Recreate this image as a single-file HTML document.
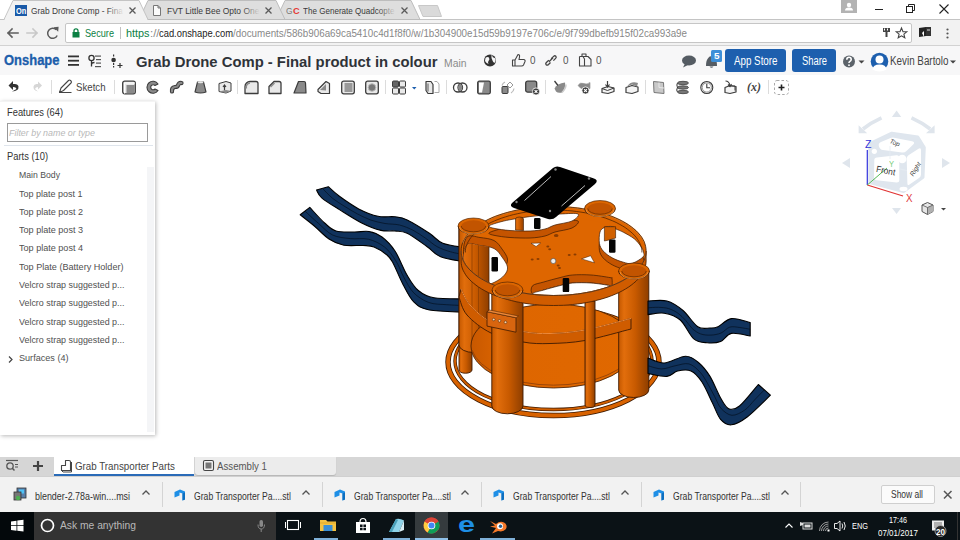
<!DOCTYPE html>
<html><head><meta charset="utf-8">
<style>
*{margin:0;padding:0;box-sizing:border-box}
html,body{width:960px;height:540px;overflow:hidden;background:#fff;font-family:"Liberation Sans",sans-serif;position:relative}
.a{position:absolute}
.t{position:absolute;white-space:nowrap;transform-origin:0 0}
svg{position:absolute;overflow:visible}
</style></head><body>
<div class="a" style="left:0;top:0;width:960px;height:20px;background:#fff"></div>
<svg style="left:0;top:0" width="960" height="46">
<rect x="0" y="19.5" width="960" height="26" fill="#f2f2f2"/>
<line x1="0" y1="19.5" x2="960" y2="19.5" stroke="#c4c4c4"/>
<path d="M276 19.5 L285 0.5 L411 0.5 L420 19.5 Z" fill="#dedede" stroke="#bdbdbd"/>
<path d="M139 19.5 L148 0.5 L276 0.5 L285 19.5 Z" fill="#dedede" stroke="#bdbdbd"/>
<path d="M423 16.5 L418.5 5.5 L437.5 5.5 L441.5 16.5 Z" fill="#dadada" stroke="#c8c8c8" stroke-linejoin="round" stroke-width="1"/>
<path d="M0 20.5 L4 20.5 L13 0.5 L139 0.5 L148 20.5 L960 20.5 L960 23 L0 23 Z" fill="#f2f2f2" stroke="none"/>
<path d="M0 19.5 L4 19.5 L13 0.5 L139 0.5 L148 19.5" fill="none" stroke="#c4c4c4"/>
<line x1="0" y1="45.5" x2="960" y2="45.5" stroke="#d2d2d2"/>
</svg>
<div class="a" style="left:15px;top:5px;width:12px;height:11px;background:#1a5aa8"></div>
<svg style="left:129.2px;top:7px" width="7" height="7"><path d="M0.5 0.5 L6.5 6.5 M6.5 0.5 L0.5 6.5" stroke="#5a5a5a" stroke-width="1.3"/></svg>
<svg style="left:265.0px;top:7px" width="7" height="7"><path d="M0.5 0.5 L6.5 6.5 M6.5 0.5 L0.5 6.5" stroke="#5a5a5a" stroke-width="1.3"/></svg>
<svg style="left:400.5px;top:7px" width="7" height="7"><path d="M0.5 0.5 L6.5 6.5 M6.5 0.5 L0.5 6.5" stroke="#5a5a5a" stroke-width="1.3"/></svg>
<svg style="left:152px;top:4px" width="10" height="13"><path d="M1.5 1.5 H6 L8.5 4 V11.5 H1.5 Z M6 1.5 V4 H8.5" fill="#fafafa" stroke="#777" stroke-width="1"/></svg>
<div class="a" style="left:841px;top:0;width:16px;height:13px;background:#b3b3b3"></div>
<svg style="left:841px;top:0" width="16" height="13"><circle cx="8" cy="5" r="2.2" fill="#fff"/><path d="M4 10.5 Q4 7.5 8 7.5 Q12 7.5 12 10.5 Z" fill="#fff"/></svg>
<svg style="left:870px;top:0" width="90" height="20"><line x1="5" y1="9.5" x2="13" y2="9.5" stroke="#222" stroke-width="1"/><rect x="36.5" y="6.5" width="6" height="6" fill="none" stroke="#222"/><path d="M38.5 6.5 V4.5 H44.5 V10.5 H42.5" fill="none" stroke="#222"/><path d="M69.5 4.5 L78.5 13.5 M78.5 4.5 L69.5 13.5" stroke="#222" stroke-width="1.1"/></svg>
<svg style="left:0;top:20px" width="70" height="26">
<path d="M8 13 H18 M8 13 L12 9 M8 13 L12 17" stroke="#5f5f5f" stroke-width="1.6" fill="none" stroke-linecap="square"/>
<path d="M27 13 H37 M37 13 L33 9 M37 13 L33 17" stroke="#c8c8c8" stroke-width="1.6" fill="none" stroke-linecap="square"/>
<path d="M56.2 9.8 A5 5 0 1 0 57.2 15.5" stroke="#5a5a5a" stroke-width="1.5" fill="none"/>
<path d="M53.5 7.2 L58.6 6.8 L58.2 11.8 Z" fill="#5a5a5a"/>
</svg>
<div class="a" style="left:65px;top:23px;width:847px;height:20px;background:#fff;border:1px solid #c6c6c6;border-radius:2px"></div>
<svg style="left:70px;top:26px" width="12" height="14"><path d="M4 6 V4.8 A2 2 0 0 1 8 4.8 V6" stroke="#0b8043" stroke-width="1.3" fill="none"/><rect x="2.5" y="6" width="7" height="5.5" fill="#0b8043"/></svg>
<div class="a" style="left:120px;top:27px;width:1px;height:12px;background:#c0c0c0"></div>
<svg style="left:880px;top:24px" width="80" height="20">
<rect x="3" y="4" width="7" height="4" fill="#444"/><rect x="5.5" y="8" width="2" height="5" fill="#444"/><rect x="4" y="4.5" width="1" height="2" fill="#fff"/><rect x="7" y="4.5" width="1" height="2" fill="#fff"/>
<path d="M21.5 4 L23 7.6 L26.8 7.8 L23.9 10.2 L24.8 13.8 L21.5 11.8 L18.2 13.8 L19.1 10.2 L16.2 7.8 L20 7.6 Z" fill="none" stroke="#444" stroke-width="1.1"/>
<path d="M39 4 L46 3 V12 L39 13 Z" fill="#222"/><rect x="46" y="3" width="5" height="9" fill="#333"/><rect x="47" y="5" width="3" height="2" fill="#888"/><path d="M42 9 L44 7 L44 13 Z" fill="#fff"/>
<circle cx="67.5" cy="5.5" r="1.1" fill="#555"/><circle cx="67.5" cy="9.5" r="1.1" fill="#555"/><circle cx="67.5" cy="13.5" r="1.1" fill="#555"/>
</svg>
<div class="a" style="left:0;top:46px;width:960px;height:28.5px;background:#f7f7f8"></div>
<svg style="left:60px;top:50px" width="70" height="22">
<rect x="8" y="5.5" width="11" height="1.8" fill="#333"/><rect x="8" y="9.8" width="11" height="1.8" fill="#333"/><rect x="8" y="14" width="11" height="1.8" fill="#333"/>
<circle cx="31.5" cy="8" r="2.6" fill="none" stroke="#333" stroke-width="1.3"/><path d="M31.5 10.6 V16.5 M31.5 14.5 Q31.5 12.5 34.5 12.5" fill="none" stroke="#333" stroke-width="1.3"/>
<rect x="35" y="5.5" width="6" height="1.2" fill="#555"/><rect x="36" y="9" width="5" height="1.2" fill="#555"/><rect x="36" y="12.5" width="5" height="1.2" fill="#555"/><rect x="35" y="16" width="6" height="1.2" fill="#555"/>
<rect x="53" y="4.5" width="1.2" height="2" fill="#333"/><circle cx="53.6" cy="10" r="2.3" fill="#333"/><rect x="53" y="13" width="1.2" height="2" fill="#333"/><rect x="53" y="16" width="1.2" height="1.5" fill="#333"/>
<path d="M57.5 15.5 H62.5 M60 13 V18" stroke="#333" stroke-width="1.2"/>
</svg>
<svg style="left:480px;top:48.5px" width="130" height="22">
<circle cx="10" cy="11.5" r="6" fill="#333"/>
<path d="M5.5 9 Q7 7.5 9 8.5 Q10 10.5 8.5 12 Q7.5 13 8.5 15 Q6 14 5 12 Z M11.5 6 Q13 6.5 12.5 8 Q14 8.5 15.5 9.5 Q16 12 14.5 14 Q13 13 12.5 11.5 Q11 10 11.5 6 Z" fill="#f7f7f8"/>
<path d="M32.5 11 H35 V17 H32.5 Z M35 11 L38 5.5 Q40 5.5 39.5 8 L39 10.5 H44 Q45.5 11 45 12.5 L43.5 16 Q43 17 41.5 17 H35" fill="none" stroke="#444" stroke-width="1.1" stroke-linejoin="round"/>
<path d="M70.5 13.5 L68.5 15.5 Q67.2 16.7 66.2 15.7 Q65.2 14.7 66.4 13.5 L68.8 11.1 M71.2 9.8 L73.6 7.4 Q74.8 6.2 75.8 7.2 Q76.8 8.2 75.6 9.4 L73.4 11.6 M69 12.8 L73 8.8" fill="none" stroke="#444" stroke-width="1.3"/>
<path d="M99.5 7.5 V17 H104 M103 7.5 H108 L111 10.5 V17 H104.5 V10 Z M99.5 7.5 H102 V5 H106 V7.5" fill="none" stroke="#444" stroke-width="1.1" stroke-linejoin="round"/>
</svg>
<svg style="left:675px;top:48px" width="60" height="26">
<ellipse cx="14" cy="12.5" rx="7" ry="5" fill="#555c63"/><path d="M10 15.5 L8 19.5 L14 16.5 Z" fill="#555c63"/>
<path d="M31 18 Q31 13 32.5 11 Q34 8 36.5 8 Q39 8 40.5 11 Q42 13 42 18 Z" fill="#555c63"/><path d="M34.5 18.5 Q36.5 21 38.5 18.5 Z" fill="#555c63"/>
<rect x="36" y="2" width="11" height="12" rx="1.5" fill="#3d8fd8"/>
</svg>
<div class="a" style="left:725px;top:48.5px;width:61px;height:23.5px;background:#1d5fae;border-radius:3px"></div>
<div class="a" style="left:792px;top:48.5px;width:43.5px;height:23.5px;background:#1d5fae;border-radius:3px"></div>
<svg style="left:840px;top:50px" width="120" height="24">
<circle cx="9" cy="11.5" r="6" fill="#5c636a"/>
<path d="M6.8 9.8 Q6.8 7.3 9 7.3 Q11.2 7.3 11.2 9.5 Q11.2 10.8 9.8 11.4 Q9 11.8 9 13" fill="none" stroke="#fff" stroke-width="1.6"/><circle cx="9" cy="15.2" r="0.9" fill="#fff"/>
<path d="M18.5 10.5 H24.5 L21.5 13.5 Z" fill="#444"/>
<circle cx="39.5" cy="11.5" r="8.8" fill="#1d5fae"/>
<circle cx="39.5" cy="9.5" r="4" fill="#fff"/><path d="M32.5 19.5 Q33 14.5 39.5 14.5 Q46 14.5 46.5 19.5 Q43.5 21.5 39.5 21.5 Q35.5 21.5 32.5 19.5 Z" fill="#fff"/>
<path d="M110 10.5 H116 L113 13.5 Z" fill="#444"/>
</svg>
<div class="a" style="left:0;top:74.5px;width:960px;height:26px;background:#fff"></div>
<svg style="left:0;top:74px" width="960" height="26"><g transform="translate(122,6.5)"><rect x="0.7" y="0.7" width="12.6" height="12.6" rx="2" fill="#e9e9e9" stroke="#3c3c3c" stroke-width="1.3"/><rect x="4.5" y="4.5" width="8.2" height="8.2" fill="#8a8a8a"/><path d="M2.5 13 V2.5 H13" stroke="#fff" stroke-width="1" fill="none"/></g><g transform="translate(146,6.5)"><path d="M12 3.5 A6 6 0 1 0 12 10 L9 8.5 A2.5 2.5 0 1 1 9 5 Z" fill="#8a8a8a" stroke="#3c3c3c" stroke-width="1.1" stroke-linejoin="round"/></g><g transform="translate(170,6.5)"><path d="M2 11 Q1.5 7 5 6.5 Q7.5 6.5 8 5 Q9 2 11.5 2.5" fill="none" stroke="#3c3c3c" stroke-width="4.2" stroke-linecap="round"/><path d="M2 11 Q1.5 7 5 6.5 Q7.5 6.5 8 5 Q9 2 11.5 2.5" fill="none" stroke="#8a8a8a" stroke-width="2.2" stroke-linecap="round"/></g><g transform="translate(194,6.5)"><path d="M3.5 1.5 H9.5 L12 11.5 Q6.5 13.5 1 11.5 Z" fill="#8a8a8a" stroke="#3c3c3c" stroke-width="1.1" stroke-linejoin="round"/><ellipse cx="6.5" cy="1.8" rx="3" ry="1" fill="#e9e9e9"/></g><g transform="translate(218,6.5)"><path d="M1 3 L8 1 L13 2.5 V10.5 L8 12.5 L1 11 Z" fill="#e9e9e9" stroke="#3c3c3c" stroke-width="1"/><path d="M6.5 10 V5 M5 6.5 L6.5 4.5 L8 6.5" stroke="#3c3c3c" stroke-width="1.2" fill="none"/><path d="M1 11 L8 12.5 L13 10.5 L8 9.5 Z" fill="#8a8a8a"/></g><g transform="translate(244,6.5)"><path d="M1 13 V6 A5 5 0 0 1 6 1 H12 Q14 1 14 3 V13 Z" fill="#e9e9e9" stroke="#3c3c3c" stroke-width="1.3" stroke-linejoin="round"/><path d="M2.5 8 A4 4 0 0 1 6 2.5" stroke="#8a8a8a" stroke-width="1.5" fill="none"/></g><g transform="translate(268,6.5)"><path d="M1 13 V6 L6 1 H11 Q13 1 13 3 V13 Z" fill="#e9e9e9" stroke="#3c3c3c" stroke-width="1.3" stroke-linejoin="round"/><path d="M2.5 6.5 L6.5 2.5" stroke="#8a8a8a" stroke-width="1.5" fill="none"/></g><g transform="translate(293,6.5)"><path d="M1 12.5 L5.5 1 H11 Q12.5 1 12.5 2.5 L13 12.5 Z" fill="#8a8a8a" stroke="#3c3c3c" stroke-width="1.2" stroke-linejoin="round"/></g><g transform="translate(317,6.5)"><path d="M1 9 L7 3 L9 1 L12.5 3 V13 H4 L1 11 Z" fill="#e9e9e9" stroke="#3c3c3c" stroke-width="1.2" stroke-linejoin="round"/><path d="M3 9.5 L9 3.5 V10 Z" fill="#8a8a8a"/></g><g transform="translate(341,6.5)"><rect x="0.7" y="0.7" width="12.6" height="12.6" rx="2" fill="#e9e9e9" stroke="#3c3c3c" stroke-width="1.3"/><rect x="3.5" y="2.5" width="8" height="9" fill="#999"/></g><g transform="translate(365,6.5)"><rect x="0.7" y="0.7" width="12.6" height="12.6" rx="2" fill="#e9e9e9" stroke="#3c3c3c" stroke-width="1.3"/><circle cx="7" cy="7" r="3.8" fill="#777" stroke="#bbb"/></g><g transform="translate(392,6.5)"><rect x="0.5" y="0.5" width="6" height="6" rx="1" fill="#666" stroke="#3c3c3c"/><rect x="7.5" y="0.5" width="6" height="6" rx="1" fill="#e9e9e9" stroke="#3c3c3c"/><rect x="0.5" y="7.5" width="6" height="6" rx="1" fill="#e9e9e9" stroke="#3c3c3c"/><rect x="7.5" y="7.5" width="6" height="6" rx="1" fill="#e9e9e9" stroke="#3c3c3c"/></g><g transform="translate(425,6.5)"><path d="M1 1 H6 L8 4 V13 H3 L1 10 Z" fill="#e9e9e9" stroke="#3c3c3c" stroke-width="1.2" stroke-linejoin="round"/><path d="M9.5 1 H12 L14 3.5 V12 H9.5" fill="none" stroke="#aaa" stroke-width="1"/><path d="M3 3 V11" stroke="#8a8a8a" stroke-width="1.5"/></g><g transform="translate(453,6.5)"><circle cx="5" cy="7" r="4.5" fill="none" stroke="#3c3c3c" stroke-width="1.3"/><circle cx="9.5" cy="7" r="4.5" fill="none" stroke="#3c3c3c" stroke-width="1.3"/><path d="M7.2 3.2 A4.5 4.5 0 0 1 7.2 10.8 A4.5 4.5 0 0 1 7.2 3.2" fill="#8a8a8a"/></g><g transform="translate(477,6.5)"><rect x="0.7" y="0.7" width="12.6" height="12.6" rx="1.5" fill="#8a8a8a" stroke="#3c3c3c" stroke-width="1.3"/><path d="M2 2 H7 L5 12 H2 Z" fill="#fff"/></g><g transform="translate(501,6.5)"><rect x="1" y="6" width="6" height="7" rx="1" fill="#8a8a8a" stroke="#3c3c3c"/><path d="M9 1.5 L12 4.5 L9 7.5 L6 4.5 Z" fill="none" stroke="#999"/><path d="M1 5 A6 6 0 0 1 4 1.5 M13 8 A6 6 0 0 1 10 12.5" stroke="#bbb" stroke-width="1.2" fill="none"/></g><g transform="translate(525,6.5)"><rect x="0.7" y="0.7" width="11" height="11" rx="2" fill="#8a8a8a" stroke="#3c3c3c" stroke-width="1.3"/><circle cx="11" cy="11" r="3.6" fill="#3c3c3c" stroke="#fff" stroke-width="0.8"/><path d="M9.6 9.6 L12.4 12.4 M12.4 9.6 L9.6 12.4" stroke="#fff" stroke-width="1.1"/></g><g transform="translate(553,6.5)"><path d="M1.5 8 Q4 3 12 2 Q13 7 9 12 Q5 13 3 11 Z" fill="#8a8a8a"/><path d="M9 12 Q13 8 13 4" stroke="#ccc" stroke-width="1.5" fill="none"/><path d="M1.5 0.5 L5 5" stroke="#3c3c3c" stroke-width="1.3"/></g><g transform="translate(577,6.5)"><path d="M1 5 Q3 1.5 7 3 Q10 4.5 13 2 V8 Q10 10 7 9 Q3 8 1 5 Z" fill="#8a8a8a" stroke="#999" stroke-width="0.7"/><circle cx="8.5" cy="10" r="3.6" fill="#3c3c3c" stroke="#fff" stroke-width="0.8"/><path d="M7.1 8.6 L9.9 11.4 M9.9 8.6 L7.1 11.4" stroke="#fff" stroke-width="1.1"/></g><g transform="translate(601,6.5)"><path d="M1 8 L7 6 L13 7.5 V11 L7 13 L1 12 Z" fill="#f4f4f4" stroke="#3c3c3c" stroke-width="1.2" stroke-linejoin="round"/><path d="M1 8 L6.5 10 L13 7.5" fill="none" stroke="#3c3c3c" stroke-width="1"/><path d="M6.5 0.5 V6 M4.5 4 L6.5 6.5 L8.5 4" stroke="#3c3c3c" stroke-width="1.2" fill="none"/></g><g transform="translate(625,6.5)"><path d="M1 7 L7 5 L13 6.5 V11 L7 13 L1 12 Z" fill="#f4f4f4" stroke="#3c3c3c" stroke-width="1.2" stroke-linejoin="round"/><path d="M2 6 Q6 0 13 2.5 L12 6 L7 4 Z" fill="#8a8a8a"/></g><g transform="translate(653,6.5)"><path d="M0.5 1 L10.5 2 L11 13 L1 12 Z" fill="#c9c9c9" stroke="#777" stroke-width="1"/><path d="M6 2 V7 L11 7.5" stroke="#e8e8e8" stroke-width="1" fill="none"/></g><g transform="translate(676,6.5)"><ellipse cx="7" cy="2.5" rx="5.5" ry="1.7" fill="#777" stroke="#3c3c3c" stroke-width="0.8"/><ellipse cx="7" cy="7" rx="5.5" ry="1.7" fill="#777" stroke="#3c3c3c" stroke-width="0.8"/><ellipse cx="7" cy="11.5" rx="5.5" ry="1.7" fill="#777" stroke="#3c3c3c" stroke-width="0.8"/><path d="M1.5 2.5 Q0 5 1.5 7 Q0 9.5 1.5 11.5" stroke="#3c3c3c" stroke-width="1.1" fill="none"/></g><g transform="translate(700,6.5)"><circle cx="6.8" cy="7" r="6" fill="none" stroke="#3c3c3c" stroke-width="1.1"/><circle cx="6.8" cy="7" r="4.6" fill="none" stroke="#777" stroke-width="0.8"/><path d="M6.8 3.2 V7.3 H10" stroke="#3c3c3c" stroke-width="1.1" fill="none"/></g><g transform="translate(724,6.5)"><path d="M1 7 L6 5 L12 6 V11.5 L6 13 L1 12 Z" fill="#f4f4f4" stroke="#3c3c3c" stroke-width="1.2" stroke-linejoin="round"/><path d="M4.5 5.5 H11 V10" fill="none" stroke="#3c3c3c" stroke-width="1"/><path d="M1.5 0.5 Q5 0.5 6 5 M4 4 L6 6 L7.5 3.5" stroke="#3c3c3c" stroke-width="1.1" fill="none"/></g><rect x="51" y="6" width="1" height="14" fill="#dcdcdc"/><rect x="114" y="6" width="1" height="14" fill="#dcdcdc"/><rect x="237" y="6" width="1" height="14" fill="#dcdcdc"/><rect x="385" y="6" width="1" height="14" fill="#dcdcdc"/><rect x="446" y="6" width="1" height="14" fill="#dcdcdc"/><rect x="545" y="6" width="1" height="14" fill="#dcdcdc"/><rect x="645" y="6" width="1" height="14" fill="#dcdcdc"/><rect x="768" y="6" width="1" height="14" fill="#dcdcdc"/><path d="M12 17.5 Q19 17 18.5 12.5 Q18 9.5 13.5 10 H13 V7 L8.5 11.5 L13 16 V13 H13.5 Q16 13 16.5 15 Z" fill="#333"/><path d="M38 17.5 Q33 16.5 33.5 12.5 Q34 9.5 37.5 10 H38 V7.5 L42 11.5 L38 15.5 V13 Q35.5 13 35 15 Z" fill="#d6d6d6"/><path d="M59.5 18.5 L61 14 L68.5 6.5 Q69.5 5.5 70.5 6.5 L71 7 Q72 8 71 9 L63.5 16.5 Z M59.5 18.5 H71.5" fill="none" stroke="#444" stroke-width="1.1" stroke-linejoin="round"/><path d="M412 13 H416.5 L414.25 15.5 Z" fill="#1d5fae"/><rect x="774.5" y="6.5" width="14" height="14" rx="2.5" fill="none" stroke="#aaa" stroke-dasharray="2.5 2" stroke-width="1"/><path d="M778.5 13.5 H784.5 M781.5 10.5 V16.5" stroke="#222" stroke-width="1.6"/></svg>
<div class="a" style="left:0;top:101px;width:155px;height:333.5px;background:#fff;box-shadow:1px 1px 4px rgba(0,0,0,0.28);border-top:1px solid #f4f4f4"></div>
<div class="a" style="left:147px;top:167px;width:6.5px;height:264.5px;background:#f4f5f7"></div>
<div class="a" style="left:7px;top:123px;width:141px;height:19px;border:1px solid #9a9a9a;background:#fff"></div>
<div class="a" style="left:4px;top:145px;width:149px;height:1px;background:#dfe5ec"></div>
<svg style="left:0;top:350px" width="20" height="20"><path d="M9 6.5 L12 9.5 L9 12.5" fill="none" stroke="#444" stroke-width="1.2"/></svg>
<div class="a" style="left:0;top:456.5px;width:960px;height:20px;background:#d6d6d6"></div>
<div class="a" style="left:54px;top:456.5px;width:139.5px;height:19px;background:#fff"></div>
<div class="a" style="left:54px;top:473.5px;width:139.5px;height:2px;background:#2a6bb8"></div>
<div class="a" style="left:194.5px;top:456.5px;width:141.5px;height:18px;background:#ececec;border-radius:0 0 3px 3px;box-shadow:0 1px 1px rgba(0,0,0,0.15)"></div>
<svg style="left:0;top:456px" width="220" height="20">
<path d="M6 4.5 H18" stroke="#555" stroke-width="1.2"/><circle cx="10" cy="10" r="3.2" fill="none" stroke="#555" stroke-width="1.3"/><path d="M12.3 12.3 L14.5 14.5" stroke="#555" stroke-width="1.5"/><path d="M15 8.5 H18 M15 11 H18" stroke="#555" stroke-width="1.1"/>
<path d="M33 10 H43 M38 5 V15" stroke="#444" stroke-width="2.2"/>
<path d="M61.5 14.5 V9.5 H65.5 V4.5 H69 Q70.5 4.5 70.5 6 V14.5 Z" fill="none" stroke="#444" stroke-width="1.1" stroke-linejoin="round"/><path d="M61.5 14.5 L63 16 H71.5 V6" fill="none" stroke="#444" stroke-width="1"/>
<rect x="203.5" y="4.5" width="10" height="10" rx="1.5" fill="#f4f4f4" stroke="#444" stroke-width="1.1"/><rect x="205.5" y="6.5" width="6" height="6" fill="#777"/>
</svg>
<div class="a" style="left:0;top:476px;width:960px;height:36px;background:#f2f2f2;border-top:1px solid #d0d0d0"></div>
<div class="a" style="left:161.5px;top:482px;width:1px;height:25px;background:#d4d4d4"></div>
<div class="a" style="left:321.5px;top:482px;width:1px;height:25px;background:#d4d4d4"></div>
<div class="a" style="left:481px;top:482px;width:1px;height:25px;background:#d4d4d4"></div>
<div class="a" style="left:641px;top:482px;width:1px;height:25px;background:#d4d4d4"></div>
<div class="a" style="left:800px;top:482px;width:1px;height:25px;background:#d4d4d4"></div>
<svg style="left:13px;top:487px" width="16" height="16"><rect x="4" y="1" width="9" height="10" fill="#5a7fa8" stroke="#333" stroke-width="0.8"/><rect x="6" y="2.5" width="5" height="4" fill="#4fc3f7"/><rect x="1" y="5" width="7" height="8" fill="#777" stroke="#333" stroke-width="0.8"/><circle cx="5" cy="11" r="2.2" fill="#4caf50"/></svg>
<svg style="left:140.5px;top:488px" width="10" height="10"><path d="M1.5 6.5 L5 3 L8.5 6.5" fill="none" stroke="#555" stroke-width="1.3"/></svg>
<svg style="left:173px;top:488px" width="14" height="14"><path d="M1.5 4 L7 1.5 L12 3.5 V11.5 L9.5 12.5 V5.5 L6.5 4.5 V7.5 L1.5 9.5 Z" fill="#1f8fe6"/><path d="M9.5 5.5 L12 4.5 V11.5 L9.5 12.5 Z" fill="#0d6ebf"/></svg>
<svg style="left:300.5px;top:488px" width="10" height="10"><path d="M1.5 6.5 L5 3 L8.5 6.5" fill="none" stroke="#555" stroke-width="1.3"/></svg>
<svg style="left:332.5px;top:488px" width="14" height="14"><path d="M1.5 4 L7 1.5 L12 3.5 V11.5 L9.5 12.5 V5.5 L6.5 4.5 V7.5 L1.5 9.5 Z" fill="#1f8fe6"/><path d="M9.5 5.5 L12 4.5 V11.5 L9.5 12.5 Z" fill="#0d6ebf"/></svg>
<svg style="left:460.0px;top:488px" width="10" height="10"><path d="M1.5 6.5 L5 3 L8.5 6.5" fill="none" stroke="#555" stroke-width="1.3"/></svg>
<svg style="left:492px;top:488px" width="14" height="14"><path d="M1.5 4 L7 1.5 L12 3.5 V11.5 L9.5 12.5 V5.5 L6.5 4.5 V7.5 L1.5 9.5 Z" fill="#1f8fe6"/><path d="M9.5 5.5 L12 4.5 V11.5 L9.5 12.5 Z" fill="#0d6ebf"/></svg>
<svg style="left:619.5px;top:488px" width="10" height="10"><path d="M1.5 6.5 L5 3 L8.5 6.5" fill="none" stroke="#555" stroke-width="1.3"/></svg>
<svg style="left:652px;top:488px" width="14" height="14"><path d="M1.5 4 L7 1.5 L12 3.5 V11.5 L9.5 12.5 V5.5 L6.5 4.5 V7.5 L1.5 9.5 Z" fill="#1f8fe6"/><path d="M9.5 5.5 L12 4.5 V11.5 L9.5 12.5 Z" fill="#0d6ebf"/></svg>
<svg style="left:779.5px;top:488px" width="10" height="10"><path d="M1.5 6.5 L5 3 L8.5 6.5" fill="none" stroke="#555" stroke-width="1.3"/></svg>
<div class="a" style="left:880.5px;top:484.5px;width:54px;height:19px;background:#fbfbfb;border:1px solid #cfcfcf;border-radius:2px"></div>
<svg style="left:942px;top:489px" width="12" height="12"><path d="M2 2 L9.5 9.5 M9.5 2 L2 9.5" stroke="#555" stroke-width="1.5"/></svg>
<div class="a" style="left:0;top:512px;width:960px;height:28px;background:#0b1216"></div>
<div class="a" style="left:0;top:512px;width:34px;height:28px;background:#03080b"></div>
<div class="a" style="left:34px;top:512px;width:241.5px;height:28px;background:#333333"></div>
<div class="a" style="left:415px;top:512px;width:33px;height:28px;background:#353b3e"></div>
<svg style="left:0;top:512px" width="960" height="28">
<path d="M11 9.5 L16.5 8.7 V13.3 H11 Z M17.3 8.6 L23.5 7.7 V13.3 H17.3 Z M11 14.1 H16.5 V18.7 L11 17.9 Z M17.3 14.1 H23.5 V19.6 L17.3 18.8 Z" fill="#fff"/>
<circle cx="47.5" cy="13.5" r="6" fill="none" stroke="#fff" stroke-width="1.7"/>
<rect x="259.5" y="8" width="3.5" height="7" rx="1.7" fill="#888"/><path d="M258 12.5 Q258 17 261.2 17 Q264.5 17 264.5 12.5 M261.2 17 V20" fill="none" stroke="#888" stroke-width="1"/>
<rect x="287.5" y="8.5" width="11" height="9" fill="none" stroke="#fff" stroke-width="1.1"/><path d="M285.5 10 V16 M300.5 10 V16" stroke="#fff" stroke-width="1"/>
<path d="M320 8 H326 L327.5 9.5 H336 V19 H320 Z" fill="#f5c242"/><rect x="323.5" y="13" width="9" height="6" fill="#3b8fd6"/><path d="M320 11 H336" stroke="#e0a92a"/>
<path d="M356 10 H370 V21 H356 Z" fill="#fff"/><path d="M360 10 Q360 6.5 363 6.5 Q366 6.5 366 10" fill="none" stroke="#fff" stroke-width="1.2"/><path d="M360 12.5 H362.6 V15 H360 Z M363.4 12.5 H366 V15 H363.4 Z M360 15.8 H362.6 V18.3 H360 Z M363.4 15.8 H366 V18.3 H363.4 Z" fill="#0b1216"/>
<path d="M389 20 L396 7 Q400 6 404 8.5 L399 20 Z" fill="#8fd3e8"/><path d="M389 20 L396 7 L398 8 L392 20 Z" fill="#4a9fb8"/><path d="M399 20 L404 8.5 V18 Z" fill="#d9eef5"/>
<circle cx="431.5" cy="13.5" r="8" fill="#db4437"/><path d="M431.5 13.5 L438.4 9.5 A8 8 0 0 1 427.5 20.4 Z" fill="#0f9d58"/><path d="M431.5 13.5 L427.5 20.4 A8 8 0 0 1 424.6 9.5 Z" fill="#ffcd40"/><path d="M424.6 9.5 A8 8 0 0 1 438.4 9.5 L431.5 13.5 Z" fill="#db4437"/><path d="M431.5 13.5 L438.4 9.5 A8 8 0 0 1 435.5 20.4 Z" fill="#f4c20d" opacity="0"/><circle cx="431.5" cy="13.5" r="3.8" fill="#fff"/><circle cx="431.5" cy="13.5" r="3" fill="#4285f4"/>

<path d="M490 9 L496 12 Q500 8.5 504 10.5 Q508 13 506 17 Q503 20.5 498 19 L492 21.5 L496 16 L490 14.5 L495 13.5 Z" fill="#f5792a"/><circle cx="500" cy="14.3" r="3" fill="#fff"/><circle cx="500.5" cy="14.3" r="1.7" fill="#275d8b"/>
<rect x="314" y="26" width="24" height="2" fill="#7fb0d8"/><rect x="383" y="26" width="27" height="2" fill="#7fb0d8"/><rect x="415" y="26" width="33" height="2" fill="#8fc0e8"/><rect x="480" y="26" width="35" height="2" fill="#7fb0d8"/>
<path d="M785.5 15.5 L789 12 L792.5 15.5" fill="none" stroke="#fff" stroke-width="1.1"/>
<rect x="803" y="11" width="9" height="6" fill="none" stroke="#ddd" stroke-width="1"/><rect x="804.5" y="12.5" width="6" height="3" fill="#ddd"/><path d="M800 10 L803 11 V13 L800 14 Z" fill="#ddd"/>
<path d="M819.5 19 A9 9 0 0 1 828.5 10 M821.5 19 A7 7 0 0 1 828.5 12 M823.5 19 A5 5 0 0 1 828.5 14 M825.5 19 A3 3 0 0 1 828.5 16" fill="none" stroke="#aaa" stroke-width="0.9"/><rect x="827.5" y="17.5" width="2" height="2" fill="#fff"/>
<path d="M834.5 11.5 H837 L840 9 V19 L837 16.5 H834.5 Z" fill="none" stroke="#fff" stroke-width="0.9"/><path d="M842 11.5 Q843.5 14 842 16.5 M844 10 Q846.5 14 844 18" fill="none" stroke="#fff" stroke-width="0.9"/>
<rect x="932" y="8.5" width="12" height="10" fill="#eee"/><path d="M934 11 H942 M934 13 H942 M934 15 H940" stroke="#555" stroke-width="0.8"/><circle cx="940.5" cy="19" r="5.5" fill="#2a2a2a" stroke="#aaa" stroke-width="0.8"/>
<rect x="957" y="0" width="1" height="28" fill="#333"/>
</svg>
<svg style="left:840px;top:105px" width="120" height="120">
<g fill="#dfe5ec">
<path d="M51.9 11.9 L56.6 5.6 L61.25 11.9 Z"/>
<path d="M10 109 L2 104 L10 99 Z" transform="translate(0,-46)"/>
<path d="M102 53 L110 58 L102 63 Z"/>
<path d="M52 103 L61 103 L56.6 109 Z"/>
</g>
<path d="M23 24 Q31 17.5 41.5 12.8" fill="none" stroke="#dfe5ec" stroke-width="3.6"/><path d="M18.6 20.3 L18.6 28.3 L27.2 28.3 Z" fill="#dfe5ec"/>
<path d="M71.5 12.8 Q82 17.5 90.2 24" fill="none" stroke="#dfe5ec" stroke-width="3.6"/><path d="M94.6 20.3 L94.6 28.3 L86 28.3 Z" fill="#dfe5ec"/>
<path d="M29.8 38.6 L51.8 28.2 L77.8 32 L84.3 42.5 L83 72.3 L63.5 86.5 L29.8 77.5 Z" fill="#dfe6ee" stroke="#dfe6ee" stroke-width="3" stroke-linejoin="round"/>
<path d="M38.9 41.2 Q38 38.5 41 37 L50 33.2 Q52 32.3 54 32.7 L72 36.2 Q75.5 37 73.2 39.5 L66.5 46 Q64.8 47.8 62 47.6 L43 45 Q39.8 44.5 38.9 41.2 Z" fill="#fff"/>
<path d="M34.3 55 Q34.3 52.5 37 52.5 L56.5 50.2 Q59.3 50 59.3 52.8 V75 Q59.3 77.6 56.5 77.5 L36.8 75.3 Q34 75 34 72.3 Z" fill="#fff"/>
<path d="M66.7 53.5 Q66.7 51.5 68.5 50.2 L78.5 43.8 Q81 42.5 81 45 V69.5 Q81 71.5 79 73 L69.5 79.5 Q67.4 81 67.4 78.5 Z" fill="#fff"/>
<circle cx="34.3" cy="46.3" r="2.6" fill="#fff"/><circle cx="62.2" cy="54" r="4.3" fill="#fff"/><ellipse cx="63.5" cy="84" rx="4" ry="2.2" fill="#fff"/>
<path d="M50 41 V54 M60 64 L67 65.5" stroke="#e6ecf2" stroke-width="0.8"/>
<path d="M27.3 45 V80" stroke="#3333dd" stroke-width="1.2"/>
<path d="M27.3 80 L63 91" stroke="#e03333" stroke-width="1.2"/>
<path d="M27.3 80 L47 63" stroke="#55bb55" stroke-width="1"/>
</svg>
<svg style="left:920px;top:201px" width="30" height="18"><path d="M2 4 L7.5 1.5 L13 4 V10.5 L7.5 13.5 L2 10.5 Z" fill="#e6e6e6" stroke="#555" stroke-width="1"/><path d="M7.5 6.5 L13 4 V10.5 L7.5 13.5 Z" fill="#b0b0b0"/><path d="M2 4 L7.5 6.5 L13 4 M7.5 6.5 V13.5" fill="none" stroke="#555" stroke-width="0.8"/><path d="M21 7 H26 L23.5 9.5 Z" fill="#444"/></svg>
<svg style="left:0;top:0" width="960" height="540"><path d="M328.3 186.7 C330.1 188.3 334.3 192.6 339.4 196.3 C344.5 200.0 352.3 205.6 358.7 208.9 C365.1 212.2 371.9 215.0 378.0 216.3 C384.1 217.6 390.1 216.2 395.0 216.8 C399.9 217.4 401.5 217.2 407.2 220.0 C412.9 222.8 423.5 229.4 429.4 233.3 C435.3 237.2 436.9 240.9 442.8 243.3 C448.7 245.7 461.3 246.8 465.0 247.5 L465.0 262.0 C460.9 261.1 446.9 259.2 440.6 256.7 C434.3 254.1 432.8 250.6 427.2 246.7 C421.6 242.8 412.6 235.9 407.2 233.3 C401.8 230.7 399.4 231.5 395.0 231.0 C390.6 230.5 386.6 231.7 381.0 230.4 C375.4 229.1 368.6 226.5 361.7 223.0 C354.8 219.5 346.1 213.8 339.4 209.6 C332.7 205.4 325.5 201.1 321.7 197.8 C317.9 194.5 317.4 191.3 316.5 190.0 Z" fill="#10325c" stroke="#000" stroke-width="1.1" stroke-linejoin="round"/><path d="M322.4 188.3 C324.1 190.0 329.0 195.4 332.8 198.5 C336.5 201.5 340.9 204.0 345.0 206.6 C349.1 209.2 353.3 211.7 357.6 214.0 C361.9 216.2 366.4 218.5 370.9 220.1 C375.5 221.6 380.2 222.6 385.0 223.5 C389.8 224.3 394.8 223.9 399.5 225.0 C404.2 226.2 408.7 228.1 413.0 230.2 C417.3 232.4 421.3 235.4 425.4 238.1 C429.4 240.8 433.0 244.4 437.2 246.7 C441.5 249.0 446.0 250.5 450.6 251.8 C455.3 253.2 462.6 254.3 465.0 254.8 " fill="none" stroke="#03101f" stroke-width="0.7"/><path d="M309.8 207.4 C312.3 210.0 320.2 219.1 324.6 223.0 C329.0 226.9 331.1 229.5 336.0 231.0 C340.9 232.5 348.8 231.9 354.3 232.0 C359.8 232.1 364.4 230.7 369.0 231.5 C373.6 232.3 377.7 233.8 382.0 237.0 C386.3 240.2 390.8 244.7 395.0 251.0 C399.2 257.3 403.1 268.4 407.0 275.0 C410.9 281.6 413.8 286.7 418.3 290.5 C422.8 294.3 426.2 296.4 434.0 297.8 C441.8 299.2 459.8 298.8 465.0 299.0 L465.0 312.2 C459.1 311.8 437.9 311.7 429.4 310.0 C420.9 308.3 418.4 306.5 414.0 302.2 C409.6 297.9 406.5 290.9 403.0 284.4 C399.5 277.9 395.7 267.9 393.0 263.0 C390.3 258.1 390.2 257.7 387.0 255.0 C383.8 252.3 378.0 248.6 374.0 247.0 C370.0 245.4 368.0 245.8 363.0 245.5 C358.0 245.2 349.6 246.3 343.9 245.2 C338.2 244.1 333.9 242.2 329.0 239.0 C324.1 235.8 319.1 230.0 314.3 226.0 C309.5 222.0 302.6 216.7 300.2 214.8 Z" fill="#10325c" stroke="#000" stroke-width="1.1" stroke-linejoin="round"/><path d="M305.0 211.1 C307.2 213.2 313.9 219.4 318.5 223.4 C323.1 227.4 327.3 232.5 332.6 235.0 C337.9 237.5 344.3 237.9 350.3 238.6 C356.2 239.3 362.7 237.8 368.4 239.2 C374.1 240.6 379.9 243.4 384.5 247.0 C389.1 250.6 392.7 255.9 395.9 260.9 C399.2 266.0 400.9 272.1 403.9 277.4 C406.8 282.7 409.6 288.6 413.7 292.8 C417.9 297.0 423.3 300.5 428.8 302.5 C434.2 304.5 440.7 304.2 446.7 304.7 C452.8 305.2 462.0 305.4 465.0 305.6 " fill="none" stroke="#03101f" stroke-width="0.7"/><defs>
<linearGradient id="gp" x1="0" x2="1" y1="0" y2="0"><stop offset="0" stop-color="#c45800"/><stop offset="0.18" stop-color="#e26e0c"/><stop offset="0.55" stop-color="#c85a00"/><stop offset="1" stop-color="#8e3e00"/></linearGradient>
<linearGradient id="gd" x1="0" x2="1" y1="0" y2="0"><stop offset="0" stop-color="#c85800"/><stop offset="0.2" stop-color="#de6600"/><stop offset="1" stop-color="#e06800"/></linearGradient>
</defs><ellipse cx="553.5" cy="362.0" rx="105.5" ry="53.5" fill="none" stroke="#3d1a02" stroke-width="5.4"/><ellipse cx="553.5" cy="362.0" rx="105.5" ry="53.5" fill="none" stroke="#d86200" stroke-width="3.8"/><ellipse cx="553.5" cy="361.0" rx="98.5" ry="48.5" fill="none" stroke="#3d1a02" stroke-width="3.4"/><ellipse cx="553.5" cy="361.0" rx="98.5" ry="48.5" fill="none" stroke="#d05e00" stroke-width="2"/><path d="M459 226 L459 370 A6.5 3.25 0 0 0 472 370 L472 226 Z" fill="url(#gp)" stroke="#3d1a02" stroke-width="0.9"/><path d="M459 226 L459 345 A15.0 7.5 0 0 0 489 345 L489 226 Z" fill="url(#gp)" stroke="#3d1a02" stroke-width="0.9"/><path d="M478.5 234 V345 M472 234 V345" stroke="#8a3c00" stroke-width="0.7"/><ellipse cx="553.6" cy="346" rx="82.6" ry="42" fill="url(#gd)" stroke="#3d1a02" stroke-width="0.8"/><path d="M472 350 A82.6 42 0 0 0 635 350" fill="none" stroke="#9a4508" stroke-width="1"/><path d="M618.7 271 L618.7 390 A15.049999999999955 7.524999999999977 0 0 0 648.8 390 L648.8 271 Z" fill="url(#gp)" stroke="#3d1a02" stroke-width="0.9"/><path d="M461.0 289.0 C462.5 291.7 465.0 299.5 470.0 305.0 C475.0 310.5 482.2 317.6 491.0 322.0 C499.8 326.4 513.2 329.6 523.0 331.5 C532.8 333.4 539.7 333.8 550.0 333.5 C560.3 333.2 571.5 332.5 585.0 330.0 C598.5 327.5 623.3 320.4 631.0 318.5 L631.0 329.0 C623.3 330.9 598.5 338.1 585.0 340.5 C571.5 342.9 560.3 343.2 550.0 343.5 C539.7 343.8 532.8 343.8 523.0 342.0 C513.2 340.2 500.3 337.5 491.0 333.0 C481.7 328.5 472.3 321.0 467.0 315.0 C461.7 309.0 460.3 300.0 459.0 297.0 Z" fill="#cf5c00" stroke="#3d1a02" stroke-width="0.9"/><path d="M461.0 289.0 C462.5 291.7 465.0 299.5 470.0 305.0 C475.0 310.5 482.2 317.6 491.0 322.0 C499.8 326.4 513.2 329.6 523.0 331.5 C532.8 333.4 539.7 333.8 550.0 333.5 C560.3 333.2 571.5 332.5 585.0 330.0 C598.5 327.5 623.3 320.4 631.0 318.5 " fill="none" stroke="#f08a3a" stroke-width="1"/><path d="M585 301 L585 405 A5.0 2.5 0 0 0 595 405 L595 301 Z" fill="url(#gp)" stroke="#3d1a02" stroke-width="0.9"/><path d="M491.8 290 L491.8 406 A15.599999999999994 7.799999999999997 0 0 0 523 406 L523 290 Z" fill="url(#gp)" stroke="#3d1a02" stroke-width="0.9"/><path d="M487 311.7 L516 317.7 L516 332.2 L487 326.1 Z" fill="#d8650f" stroke="#3d1a02" stroke-width="0.8"/><path d="M487 311.7 L516 317.7 L518.5 316 L489.5 310 Z" fill="#f08a3a" stroke="#3d1a02" stroke-width="0.5"/><circle cx="493.7" cy="319.5" r="1.3" fill="#fbd3a8" stroke="#3d1a02" stroke-width="0.5"/><circle cx="499.5" cy="320.8" r="1.3" fill="#fbd3a8" stroke="#3d1a02" stroke-width="0.5"/><circle cx="505.5" cy="322.3" r="1.3" fill="#fbd3a8" stroke="#3d1a02" stroke-width="0.5"/><path d="M646.1 251.0 L646.0 253.3 L645.6 255.7 L645.0 258.0 L644.1 260.3 L642.9 262.5 L641.6 264.8 L640.0 266.9 L638.1 269.1 L636.0 271.2 L633.7 273.2 L631.2 275.2 L628.4 277.2 L625.5 279.0 L622.3 280.8 L619.0 282.5 L615.5 284.1 L611.8 285.6 L608.0 287.0 L604.0 288.3 L599.9 289.5 L595.6 290.6 L591.2 291.7 L586.7 292.5 L582.2 293.3 L577.5 294.0 L572.8 294.5 L568.1 295.0 L563.3 295.3 L558.4 295.4 L553.6 295.5 L548.8 295.4 L543.9 295.3 L539.1 295.0 L534.4 294.5 L529.7 294.0 L525.0 293.3 L520.5 292.5 L516.0 291.7 L511.6 290.6 L507.4 289.5 L503.2 288.3 L499.2 287.0 L495.4 285.6 L491.7 284.1 L488.2 282.5 L484.9 280.8 L481.7 279.0 L478.8 277.2 L476.0 275.2 L473.5 273.2 L471.2 271.2 L469.1 269.1 L467.2 266.9 L465.6 264.8 L464.3 262.5 L463.1 260.3 L462.2 258.0 L461.6 255.7 L461.2 253.3 L461.1 251.0 L461.2 248.7 L461.6 246.3 L462.2 244.0 L463.1 241.7 L464.3 239.5 L465.6 237.2 L467.2 235.1 L469.1 232.9 L471.2 230.8 L473.5 228.8 L476.0 226.8 L478.8 224.8 L481.7 223.0 L484.9 221.2 L488.2 219.5 L491.7 217.9 L495.4 216.4 L499.2 215.0 L503.2 213.7 L507.3 212.5 L511.6 211.4 L516.0 210.3 L520.5 209.5 L525.0 208.7 L529.7 208.0 L534.4 207.5 L539.1 207.0 L543.9 206.7 L548.8 206.6 L553.6 206.5 L558.4 206.6 L563.3 206.7 L568.1 207.0 L572.8 207.5 L577.5 208.0 L582.2 208.7 L586.7 209.5 L591.2 210.3 L595.6 211.4 L599.9 212.5 L604.0 213.7 L608.0 215.0 L611.8 216.4 L615.5 217.9 L619.0 219.5 L622.3 221.2 L625.5 223.0 L628.4 224.8 L631.2 226.8 L633.7 228.7 L636.0 230.8 L638.1 232.9 L640.0 235.1 L641.6 237.2 L642.9 239.5 L644.1 241.7 L645.0 244.0 L645.6 246.3 L646.0 248.7 Z" fill="#de6600"/><path d="M646.1 261.0 L646.0 263.3 L645.6 265.7 L645.0 268.0 L644.1 270.3 L642.9 272.5 L641.6 274.8 L640.0 276.9 L638.1 279.1 L636.0 281.2 L633.7 283.2 L631.2 285.2 L628.4 287.2 L625.5 289.0 L622.3 290.8 L619.0 292.5 L615.5 294.1 L611.8 295.6 L608.0 297.0 L604.0 298.3 L599.9 299.5 L595.6 300.6 L591.2 301.7 L586.7 302.5 L582.2 303.3 L577.5 304.0 L572.8 304.5 L568.1 305.0 L563.3 305.3 L558.4 305.4 L553.6 305.5 L548.8 305.4 L543.9 305.3 L539.1 305.0 L534.4 304.5 L529.7 304.0 L525.0 303.3 L520.5 302.5 L516.0 301.7 L511.6 300.6 L507.4 299.5 L503.2 298.3 L499.2 297.0 L495.4 295.6 L491.7 294.1 L488.2 292.5 L484.9 290.8 L481.7 289.0 L478.8 287.2 L476.0 285.2 L473.5 283.2 L471.2 281.2 L469.1 279.1 L467.2 276.9 L465.6 274.8 L464.3 272.5 L463.1 270.3 L462.2 268.0 L461.6 265.7 L461.2 263.3 L461.1 261.0 L461.2 258.7 L461.6 256.3 L462.2 254.0 L463.1 251.7 L464.3 249.5 L465.6 247.2 L467.2 245.1 L469.1 242.9 L471.2 240.8 L473.5 238.8 L476.0 236.8 L478.8 234.8 L481.7 233.0 L484.9 231.2 L488.2 229.5 L491.7 227.9 L495.4 226.4 L499.2 225.0 L503.2 223.7 L507.3 222.5 L511.6 221.4 L516.0 220.3 L520.5 219.5 L525.0 218.7 L529.7 218.0 L534.4 217.5 L539.1 217.0 L543.9 216.7 L548.8 216.6 L553.6 216.5 L558.4 216.6 L563.3 216.7 L568.1 217.0 L572.8 217.5 L577.5 218.0 L582.2 218.7 L586.7 219.5 L591.2 220.3 L595.6 221.4 L599.9 222.5 L604.0 223.7 L608.0 225.0 L611.8 226.4 L615.5 227.9 L619.0 229.5 L622.3 231.2 L625.5 233.0 L628.4 234.8 L631.2 236.8 L633.7 238.7 L636.0 240.8 L638.1 242.9 L640.0 245.1 L641.6 247.2 L642.9 249.5 L644.1 251.7 L645.0 254.0 L645.6 256.3 L646.0 258.7 Z" fill="#de6600"/><path d="M489.0 233.0 C489.8 231.9 495.8 230.2 500.0 229.0 C504.2 227.8 508.2 227.0 514.0 226.0 C519.8 225.0 527.3 223.8 535.0 223.0 C542.7 222.2 552.8 221.3 560.0 221.0 C567.2 220.7 576.0 219.8 578.0 221.0 C580.0 222.2 575.8 226.2 572.0 228.0 C568.2 229.8 559.5 230.7 555.0 232.0 C550.5 233.3 549.2 235.0 545.0 236.0 C540.8 237.0 535.8 237.8 530.0 238.0 C524.2 238.2 515.8 237.9 510.0 237.5 C504.2 237.1 498.5 236.2 495.0 235.5 C491.5 234.8 488.2 234.1 489.0 233.0 Z" fill="#c45400" stroke="#3d1a02" stroke-width="0.7"/><path d="M467.0 237.0 C469.8 234.2 475.5 236.9 480.0 237.5 C484.5 238.1 490.3 238.6 494.0 240.5 C497.7 242.4 499.8 245.9 502.0 249.0 C504.2 252.1 507.1 256.0 507.5 259.0 C507.9 262.0 506.6 264.5 504.5 267.0 C502.4 269.5 498.8 272.2 495.0 274.0 C491.2 275.8 486.3 278.1 482.0 277.5 C477.7 276.9 472.1 274.4 469.0 270.5 C465.9 266.6 463.8 259.6 463.5 254.0 C463.2 248.4 464.2 239.8 467.0 237.0 Z" fill="#c45400" stroke="#3d1a02" stroke-width="0.7"/><path d="M600.0 239.0 C600.8 236.4 602.4 235.4 604.4 234.5 C606.4 233.6 610.1 233.2 612.0 233.5 C613.9 233.8 614.1 235.1 616.0 236.0 C617.9 236.9 620.2 237.5 623.3 239.2 C626.4 240.8 631.4 243.5 634.4 245.9 C637.4 248.3 639.6 251.5 641.1 253.7 C642.6 255.9 643.2 257.5 643.5 259.2 C643.8 260.9 644.9 262.1 643.0 264.0 C641.1 265.9 635.5 269.4 632.2 270.3 C628.9 271.2 626.6 270.1 623.3 269.2 C620.0 268.3 615.5 266.6 612.2 264.8 C608.9 263.0 605.4 260.5 603.3 258.1 C601.2 255.7 599.9 253.5 599.4 250.3 C598.9 247.1 599.2 241.6 600.0 239.0 Z" fill="#c45400" stroke="#3d1a02" stroke-width="0.7"/><path d="M532.5 285.8 C534.4 283.8 539.2 283.4 543.8 282.0 C548.4 280.6 555.2 278.8 560.0 277.6 C564.8 276.4 567.3 275.4 572.5 275.0 C577.7 274.6 584.8 274.6 591.0 275.0 C597.2 275.4 606.5 277.0 610.0 277.6 C613.5 278.2 611.7 277.0 612.0 278.5 C612.3 280.0 612.3 285.3 612.0 286.5 C611.7 287.7 613.5 286.2 610.0 285.6 C606.5 285.0 597.2 283.4 591.0 283.0 C584.8 282.6 577.7 282.6 572.5 283.0 C567.3 283.4 564.8 284.4 560.0 285.6 C555.2 286.8 548.4 288.6 543.8 290.0 C539.2 291.4 534.4 294.5 532.5 293.8 C530.6 293.1 530.6 287.8 532.5 285.8 Z" fill="#c45400" stroke="#3d1a02" stroke-width="0.7"/><path d="M489.0 226.0 C489.8 224.9 495.8 223.2 500.0 222.0 C504.2 220.8 508.2 220.0 514.0 219.0 C519.8 218.0 527.3 216.8 535.0 216.0 C542.7 215.2 552.8 214.3 560.0 214.0 C567.2 213.7 576.0 212.8 578.0 214.0 C580.0 215.2 575.8 219.2 572.0 221.0 C568.2 222.8 559.5 223.7 555.0 225.0 C550.5 226.3 549.2 228.0 545.0 229.0 C540.8 230.0 535.8 230.8 530.0 231.0 C524.2 231.2 515.8 230.9 510.0 230.5 C504.2 230.1 498.5 229.2 495.0 228.5 C491.5 227.8 488.2 227.1 489.0 226.0 Z" fill="#fff" stroke="#3d1a02" stroke-width="0.7"/><path d="M467.0 245.0 C469.8 242.2 475.5 244.9 480.0 245.5 C484.5 246.1 490.3 246.6 494.0 248.5 C497.7 250.4 499.8 253.9 502.0 257.0 C504.2 260.1 507.1 264.0 507.5 267.0 C507.9 270.0 506.6 272.5 504.5 275.0 C502.4 277.5 498.8 280.2 495.0 282.0 C491.2 283.8 486.3 286.1 482.0 285.5 C477.7 284.9 472.1 282.4 469.0 278.5 C465.9 274.6 463.8 267.6 463.5 262.0 C463.2 256.4 464.2 247.8 467.0 245.0 Z" fill="#fff" stroke="#3d1a02" stroke-width="0.7"/><path d="M600.0 232.0 C600.8 229.4 602.4 228.4 604.4 227.5 C606.4 226.6 610.1 226.2 612.0 226.5 C613.9 226.8 614.1 228.1 616.0 229.0 C617.9 229.9 620.2 230.5 623.3 232.2 C626.4 233.8 631.4 236.5 634.4 238.9 C637.4 241.3 639.6 244.5 641.1 246.7 C642.6 248.9 643.2 250.5 643.5 252.2 C643.8 253.9 644.9 255.2 643.0 257.0 C641.1 258.9 635.5 262.4 632.2 263.3 C628.9 264.2 626.6 263.1 623.3 262.2 C620.0 261.3 615.5 259.7 612.2 257.8 C608.9 256.0 605.4 253.5 603.3 251.1 C601.2 248.7 599.9 246.5 599.4 243.3 C598.9 240.1 599.2 234.6 600.0 232.0 Z" fill="#fff" stroke="#3d1a02" stroke-width="0.7"/><path d="M532.5 293.8 C530.8 292.9 539.2 291.4 543.8 290.0 C548.4 288.6 555.2 286.8 560.0 285.6 C564.8 284.4 567.3 283.4 572.5 283.0 C577.7 282.6 584.8 282.6 591.0 283.0 C597.2 283.4 606.5 285.0 610.0 285.6 C613.5 286.2 615.2 285.4 612.0 286.5 C608.8 287.6 597.6 291.1 591.0 292.5 C584.4 293.9 578.7 294.5 572.5 295.0 C566.3 295.5 560.5 295.8 553.8 295.6 C547.1 295.4 534.2 294.7 532.5 293.8 Z" fill="#fff" stroke="#3d1a02" stroke-width="0.7"/><clipPath id="clh"><path d="M467.0 245.0 C469.8 242.2 475.5 244.9 480.0 245.5 C484.5 246.1 490.3 246.6 494.0 248.5 C497.7 250.4 499.8 253.9 502.0 257.0 C504.2 260.1 507.1 264.0 507.5 267.0 C507.9 270.0 506.6 272.5 504.5 275.0 C502.4 277.5 498.8 280.2 495.0 282.0 C491.2 283.8 486.3 286.1 482.0 285.5 C477.7 284.9 472.1 282.4 469.0 278.5 C465.9 274.6 463.8 267.6 463.5 262.0 C463.2 256.4 464.2 247.8 467.0 245.0 Z"/></clipPath><g clip-path="url(#clh)"><rect x="459" y="220" width="30" height="80" fill="url(#gp)" stroke="#3d1a02" stroke-width="0.7"/><path d="M478.5 220 V300 M472 220 V300" stroke="#8a3c00" stroke-width="0.7"/></g><path d="M604.4 226.7 L615.6 226.7 L615.6 238 Q610 240 604.4 241 Z" fill="#d06000" stroke="#3d1a02" stroke-width="0.6"/><path d="M515.5 230 V219 A4 2 0 0 1 523.5 219 V230.5 Z" fill="url(#gp)" stroke="#3d1a02" stroke-width="0.6"/><rect x="534" y="218" width="6.5" height="11" rx="1.2" fill="#050505"/><rect x="491.5" y="257" width="6.5" height="14.399999999999977" rx="1.2" fill="#050505"/><rect x="609" y="239.4" width="6.5" height="13.400000000000006" rx="1.2" fill="#050505"/><rect x="562.7" y="277.9" width="6.5" height="14.200000000000045" rx="1.2" fill="#050505"/><path d="M646.1 251.0 L646.0 253.3 L645.6 255.7 L645.0 258.0 L644.1 260.3 L642.9 262.5 L641.6 264.8 L640.0 266.9 L638.1 269.1 L636.0 271.2 L633.7 273.2 L631.2 275.2 L628.4 277.2 L625.5 279.0 L622.3 280.8 L619.0 282.5 L615.5 284.1 L611.8 285.6 L608.0 287.0 L604.0 288.3 L599.9 289.5 L595.6 290.6 L591.2 291.7 L586.7 292.5 L582.2 293.3 L577.5 294.0 L572.8 294.5 L568.1 295.0 L563.3 295.3 L558.4 295.4 L553.6 295.5 L548.8 295.4 L543.9 295.3 L539.1 295.0 L534.4 294.5 L529.7 294.0 L525.0 293.3 L520.5 292.5 L516.0 291.7 L511.6 290.6 L507.4 289.5 L503.2 288.3 L499.2 287.0 L495.4 285.6 L491.7 284.1 L488.2 282.5 L484.9 280.8 L481.7 279.0 L478.8 277.2 L476.0 275.2 L473.5 273.2 L471.2 271.2 L469.1 269.1 L467.2 266.9 L465.6 264.8 L464.3 262.5 L463.1 260.3 L462.2 258.0 L461.6 255.7 L461.2 253.3 L461.1 251.0 L461.1 261.0 L461.2 263.3 L461.6 265.7 L462.2 268.0 L463.1 270.3 L464.3 272.5 L465.6 274.8 L467.2 276.9 L469.1 279.1 L471.2 281.2 L473.5 283.2 L476.0 285.2 L478.8 287.2 L481.7 289.0 L484.9 290.8 L488.2 292.5 L491.7 294.1 L495.4 295.6 L499.2 297.0 L503.2 298.3 L507.4 299.5 L511.6 300.6 L516.0 301.7 L520.5 302.5 L525.0 303.3 L529.7 304.0 L534.4 304.5 L539.1 305.0 L543.9 305.3 L548.8 305.4 L553.6 305.5 L558.4 305.4 L563.3 305.3 L568.1 305.0 L572.8 304.5 L577.5 304.0 L582.2 303.3 L586.7 302.5 L591.2 301.7 L595.6 300.6 L599.9 299.5 L604.0 298.3 L608.0 297.0 L611.8 295.6 L615.5 294.1 L619.0 292.5 L622.3 290.8 L625.5 289.0 L628.4 287.2 L631.2 285.2 L633.7 283.2 L636.0 281.2 L638.1 279.1 L640.0 276.9 L641.6 274.8 L642.9 272.5 L644.1 270.3 L645.0 268.0 L645.6 265.7 L646.0 263.3 L646.1 261.0 Z" fill="#d05c00" stroke="#3d1a02" stroke-width="0.8"/><path d="M646.1 251.0 L646.0 253.3 L645.6 255.7 L645.0 258.0 L644.1 260.3 L642.9 262.5 L641.6 264.8 L640.0 266.9 L638.1 269.1 L636.0 271.2 L633.7 273.2 L631.2 275.2 L628.4 277.2 L625.5 279.0 L622.3 280.8 L619.0 282.5 L615.5 284.1 L611.8 285.6 L608.0 287.0 L604.0 288.3 L599.9 289.5 L595.6 290.6 L591.2 291.7 L586.7 292.5 L582.2 293.3 L577.5 294.0 L572.8 294.5 L568.1 295.0 L563.3 295.3 L558.4 295.4 L553.6 295.5 L548.8 295.4 L543.9 295.3 L539.1 295.0 L534.4 294.5 L529.7 294.0 L525.0 293.3 L520.5 292.5 L516.0 291.7 L511.6 290.6 L507.4 289.5 L503.2 288.3 L499.2 287.0 L495.4 285.6 L491.7 284.1 L488.2 282.5 L484.9 280.8 L481.7 279.0 L478.8 277.2 L476.0 275.2 L473.5 273.2 L471.2 271.2 L469.1 269.1 L467.2 266.9 L465.6 264.8 L464.3 262.5 L463.1 260.3 L462.2 258.0 L461.6 255.7 L461.2 253.3 L461.1 251.0" fill="none" stroke="#f59a4a" stroke-width="0.9"/><path d="M462.5 243.3 L463.5 241.0 L464.7 238.7 L466.1 236.5 L467.8 234.3 L469.8 232.2 L471.9 230.1 L474.3 228.1 L476.9 226.1 L479.7 224.2 L482.7 222.4 L485.9 220.7 L489.3 219.0 L492.9 217.4 L496.7 215.9 L500.5 214.5 L504.6 213.3 L508.8 212.1 L513.1 211.0 L517.5 210.0 L522.0 209.2 L526.6 208.4 L531.2 207.8 L536.0 207.3 L540.7 206.9 L545.5 206.7 L550.4 206.5 L555.2 206.5 L560.1 206.6 L564.9 206.8 L569.7 207.2 L574.4 207.6 L579.1 208.2 L583.7 208.9 L588.3 209.7 L592.7 210.7 L597.0 211.7 L601.2 212.9 L605.3 214.1 L609.3 215.5 L613.1 216.9 L616.7 218.5 L620.1 220.1 L623.4 221.8 L626.5 223.6 L629.4 225.5 L632.0 227.4 L634.5 229.4 L636.7 231.5 L638.7 233.6 L640.5 235.8 L642.1 238.0 L643.4 240.2 L644.4 242.5" fill="none" stroke="#f5a050" stroke-width="1.2"/><path d="M646.1 251.0 L646.0 253.3 L645.6 255.7 L645.0 258.0 L644.1 260.3 L642.9 262.5 L641.6 264.8 L640.0 266.9 L638.1 269.1 L636.0 271.2 L633.7 273.2 L631.2 275.2 L628.4 277.2 L625.5 279.0 L622.3 280.8 L619.0 282.5 L615.5 284.1 L611.8 285.6 L608.0 287.0 L604.0 288.3 L599.9 289.5 L595.6 290.6 L591.2 291.7 L586.7 292.5 L582.2 293.3 L577.5 294.0 L572.8 294.5 L568.1 295.0 L563.3 295.3 L558.4 295.4 L553.6 295.5 L548.8 295.4 L543.9 295.3 L539.1 295.0 L534.4 294.5 L529.7 294.0 L525.0 293.3 L520.5 292.5 L516.0 291.7 L511.6 290.6 L507.4 289.5 L503.2 288.3 L499.2 287.0 L495.4 285.6 L491.7 284.1 L488.2 282.5 L484.9 280.8 L481.7 279.0 L478.8 277.2 L476.0 275.2 L473.5 273.2 L471.2 271.2 L469.1 269.1 L467.2 266.9 L465.6 264.8 L464.3 262.5 L463.1 260.3 L462.2 258.0 L461.6 255.7 L461.2 253.3 L461.1 251.0 L461.2 248.7 L461.6 246.3 L462.2 244.0 L463.1 241.7 L464.3 239.5 L465.6 237.2 L467.2 235.1 L469.1 232.9 L471.2 230.8 L473.5 228.8 L476.0 226.8 L478.8 224.8 L481.7 223.0 L484.9 221.2 L488.2 219.5 L491.7 217.9 L495.4 216.4 L499.2 215.0 L503.2 213.7 L507.3 212.5 L511.6 211.4 L516.0 210.3 L520.5 209.5 L525.0 208.7 L529.7 208.0 L534.4 207.5 L539.1 207.0 L543.9 206.7 L548.8 206.6 L553.6 206.5 L558.4 206.6 L563.3 206.7 L568.1 207.0 L572.8 207.5 L577.5 208.0 L582.2 208.7 L586.7 209.5 L591.2 210.3 L595.6 211.4 L599.9 212.5 L604.0 213.7 L608.0 215.0 L611.8 216.4 L615.5 217.9 L619.0 219.5 L622.3 221.2 L625.5 223.0 L628.4 224.8 L631.2 226.8 L633.7 228.7 L636.0 230.8 L638.1 232.9 L640.0 235.1 L641.6 237.2 L642.9 239.5 L644.1 241.7 L645.0 244.0 L645.6 246.3 L646.0 248.7 Z" fill="none" stroke="#3d1a02" stroke-width="0.8"/><path d="M465.3 252.5 L465.4 250.3 L465.7 248.1 L466.4 245.9 L467.2 243.7 L468.3 241.5 L469.6 239.4 L471.1 237.3 L472.9 235.2 L474.9 233.2 L477.1 231.3 L479.5 229.4 L482.1 227.5 L484.9 225.8 L488.0 224.1 L491.1 222.4 L494.5 220.9 L498.0 219.5 L501.7 218.1 L505.5 216.9 L509.4 215.7 L513.5 214.6 L517.7 213.7 L521.9 212.8 L526.3 212.1 L530.7 211.5 L535.2 210.9 L539.8 210.5 L544.4 210.2 L549.0 210.1 L553.6 210.0 L558.2 210.1 L562.8 210.2 L567.4 210.5 L572.0 210.9 L576.5 211.5 L580.9 212.1 L585.3 212.8 L589.5 213.7 L593.7 214.6 L597.8 215.7 L601.7 216.9 L605.5 218.1 L609.2 219.5 L612.7 220.9 L616.1 222.4 L619.2 224.1 L622.3 225.8 L625.1 227.5 L627.7 229.4 L630.1 231.3 L632.3 233.2 L634.3 235.2 L636.1 237.3 L637.6 239.4 L638.9 241.5 L640.0 243.7 L640.8 245.9 L641.5 248.1 L641.8 250.3 L641.9 252.5" fill="none" stroke="#3d1a02" stroke-width="0.7"/><ellipse cx="634.0" cy="271.0" rx="15.5" ry="8" fill="#dc6600"/><path d="M618.5 271.0 A15.5 8 0 0 0 649.5 271.0" fill="none" stroke="#3d1a02" stroke-width="0.9"/><path d="M618.5 271.0 A15.5 8 0 0 1 649.5 271.0" fill="none" stroke="#3d1a02" stroke-width="0.6"/><ellipse cx="634.0" cy="271.0" rx="12.3" ry="5.8" fill="#c25400"/><path d="M621.7 271.0 A12.3 5.8 0 0 0 646.3 271.0" fill="none" stroke="#6a2e00" stroke-width="0.8"/><path d="M620.0 272.0 A14 7 0 0 0 648.0 272.0" fill="none" stroke="#f2a050" stroke-width="0.7"/><ellipse cx="600.0" cy="208.5" rx="15.5" ry="8" fill="#dc6600"/><path d="M584.5 208.5 A15.5 8 0 0 0 615.5 208.5" fill="none" stroke="#3d1a02" stroke-width="0.9"/><path d="M584.5 208.5 A15.5 8 0 0 1 615.5 208.5" fill="none" stroke="#3d1a02" stroke-width="0.6"/><ellipse cx="600.0" cy="208.5" rx="12.3" ry="5.8" fill="#c25400"/><path d="M587.7 208.5 A12.3 5.8 0 0 0 612.3 208.5" fill="none" stroke="#6a2e00" stroke-width="0.8"/><path d="M586.0 209.5 A14 7 0 0 0 614.0 209.5" fill="none" stroke="#f2a050" stroke-width="0.7"/><ellipse cx="473.5" cy="226.0" rx="15.5" ry="8" fill="#dc6600"/><path d="M458.0 226.0 A15.5 8 0 0 0 489.0 226.0" fill="none" stroke="#3d1a02" stroke-width="0.9"/><path d="M458.0 226.0 A15.5 8 0 0 1 489.0 226.0" fill="none" stroke="#3d1a02" stroke-width="0.6"/><ellipse cx="473.5" cy="226.0" rx="12.3" ry="5.8" fill="#c25400"/><path d="M461.2 226.0 A12.3 5.8 0 0 0 485.8 226.0" fill="none" stroke="#6a2e00" stroke-width="0.8"/><path d="M459.5 227.0 A14 7 0 0 0 487.5 227.0" fill="none" stroke="#f2a050" stroke-width="0.7"/><ellipse cx="507.5" cy="290.0" rx="15.5" ry="8" fill="#dc6600"/><path d="M492.0 290.0 A15.5 8 0 0 0 523.0 290.0" fill="none" stroke="#3d1a02" stroke-width="0.9"/><path d="M492.0 290.0 A15.5 8 0 0 1 523.0 290.0" fill="none" stroke="#3d1a02" stroke-width="0.6"/><ellipse cx="507.5" cy="290.0" rx="12.3" ry="5.8" fill="#c25400"/><path d="M495.2 290.0 A12.3 5.8 0 0 0 519.8 290.0" fill="none" stroke="#6a2e00" stroke-width="0.8"/><path d="M493.5 291.0 A14 7 0 0 0 521.5 291.0" fill="none" stroke="#f2a050" stroke-width="0.7"/><circle cx="553.3" cy="261" r="2.6" fill="#eee" stroke="#555" stroke-width="0.7"/><ellipse cx="547.8" cy="246.6" rx="1.5" ry="1" fill="#8a3c00"/><ellipse cx="549.7" cy="249.2" rx="1.5" ry="1" fill="#8a3c00"/><ellipse cx="532.2" cy="259.6" rx="1.5" ry="1" fill="#8a3c00"/><ellipse cx="538" cy="258.9" rx="1.5" ry="1" fill="#8a3c00"/><ellipse cx="569.2" cy="255" rx="1.5" ry="1" fill="#8a3c00"/><ellipse cx="575" cy="254.4" rx="1.5" ry="1" fill="#8a3c00"/><ellipse cx="558.2" cy="265.4" rx="1.5" ry="1" fill="#8a3c00"/><ellipse cx="559.5" cy="268" rx="1.5" ry="1" fill="#8a3c00"/><ellipse cx="556.2" cy="235.6" rx="2.3" ry="1.5" fill="#8a3c00"/><path d="M531 243.3 L540.7 243 L536.1 246.5 Z M581.5 258.9 L590.6 255.7 L594.5 262.8 Z" fill="#fff" stroke="#3d1a02" stroke-width="0.5"/><path d="M512 203 Q509 206 514 208 L548 219 Q553 220 556 217 L595 184 Q599 180 594 178.5 L560 167 Q556 165.5 553 168 Z" fill="#000"/><path d="M524.5 200.5 L551 176.5 M561.5 206 L585 185.5" stroke="#e8e8e8" stroke-width="0.8"/><circle cx="555.5" cy="169.5" r="1.2" fill="#888"/><circle cx="589" cy="178.5" r="1.2" fill="#888"/><circle cx="516.5" cy="202" r="1.2" fill="#888"/><circle cx="550" cy="211" r="1.2" fill="#888"/><path d="M648.0 301.0 C651.1 301.0 661.1 299.4 666.9 301.0 C672.7 302.6 677.9 306.2 683.0 310.5 C688.1 314.8 693.3 323.8 697.8 326.7 C702.3 329.6 706.5 328.0 709.9 328.0 C713.3 328.0 714.4 328.3 718.0 326.7 C721.6 325.1 726.0 319.3 731.4 318.6 C736.8 317.9 747.1 321.9 750.2 322.6 L750.2 336.0 C747.1 335.6 736.3 332.5 731.4 333.4 C726.5 334.3 724.6 339.9 720.6 341.5 C716.6 343.1 711.7 343.2 707.2 342.8 C702.7 342.4 698.3 342.6 693.8 338.8 C689.3 335.0 685.2 324.3 680.3 320.0 C675.4 315.7 669.6 314.1 664.2 313.2 C658.8 312.3 650.7 314.4 648.0 314.6 Z" fill="#10325c" stroke="#000" stroke-width="1.1" stroke-linejoin="round"/><path d="M648.0 307.8 C649.8 307.7 655.1 307.2 658.5 307.3 C662.0 307.5 665.4 307.6 668.7 308.6 C672.0 309.6 675.3 311.3 678.1 313.3 C680.9 315.2 683.2 317.8 685.6 320.3 C688.0 322.9 689.7 326.2 692.2 328.5 C694.7 330.8 697.5 332.8 700.6 333.9 C703.7 335.0 707.5 335.3 710.9 335.1 C714.3 335.0 717.9 334.3 721.1 333.0 C724.2 331.7 726.7 328.0 729.8 327.1 C732.9 326.2 736.4 327.1 739.8 327.5 C743.2 327.9 748.5 329.0 750.2 329.3 " fill="none" stroke="#03101f" stroke-width="0.7"/><path d="M648.0 358.0 C650.7 358.8 657.9 363.3 664.2 363.0 C670.5 362.7 679.9 356.2 685.7 356.2 C691.5 356.2 695.0 359.6 699.0 363.0 C703.0 366.4 706.4 370.6 710.0 376.4 C713.6 382.2 717.5 392.6 720.6 398.0 C723.7 403.4 725.6 407.4 728.7 408.7 C731.9 410.0 734.6 410.0 739.5 406.0 C744.4 402.0 755.2 388.1 758.3 384.5 L770.4 395.2 C766.6 398.8 754.0 411.8 747.5 416.7 C741.0 421.6 735.9 424.4 731.4 424.8 C726.9 425.2 723.7 423.0 720.6 419.4 C717.5 415.8 715.7 409.6 712.6 403.3 C709.5 397.0 705.4 387.2 701.8 381.8 C698.2 376.4 695.0 372.8 691.0 371.0 C687.0 369.2 681.6 370.1 677.6 371.0 C673.6 371.9 671.8 376.0 666.9 376.4 C662.0 376.8 651.1 374.0 648.0 373.5 Z" fill="#10325c" stroke="#000" stroke-width="1.1" stroke-linejoin="round"/><path d="M648.0 365.8 C650.3 366.3 657.3 368.9 661.8 368.9 C666.3 368.9 670.6 366.6 675.1 365.8 C679.6 365.0 684.7 362.8 688.9 363.9 C693.0 364.9 697.0 368.8 700.1 372.2 C703.3 375.6 705.5 379.9 707.9 384.0 C710.3 388.0 712.3 392.3 714.6 396.4 C716.8 400.6 718.4 405.6 721.3 408.7 C724.2 411.8 728.1 415.0 732.0 415.3 C735.8 415.5 740.9 412.7 744.6 410.2 C748.4 407.7 751.2 403.4 754.5 400.0 C757.8 396.6 762.7 391.5 764.3 389.9 " fill="none" stroke="#03101f" stroke-width="0.7"/></svg>
<div class="t" style="left:16.2px;top:6.16px;font-size:9.5px;line-height:9.5px;color:#fff;font-weight:bold;font-style:normal;font-family:'Liberation Sans',sans-serif;transform:scaleX(0.7808);">On</div>
<div class="t" style="left:31px;top:5.56px;font-size:9.5px;line-height:9.5px;color:#3a3a3a;font-weight:normal;font-style:normal;font-family:'Liberation Sans',sans-serif;transform:scaleX(0.8801);">Grab Drone Comp - Fina</div>
<div class="t" style="left:166.5px;top:5.56px;font-size:9.5px;line-height:9.5px;color:#3a3a3a;font-weight:normal;font-style:normal;font-family:'Liberation Sans',sans-serif;transform:scaleX(0.8892);">FVT Little Bee Opto One</div>
<div class="t" style="left:286px;top:5.56px;font-size:9.5px;line-height:9.5px;color:#777;font-weight:normal;font-style:normal;font-family:'Liberation Sans',sans-serif;transform:scaleX(0.8796);">G</div>
<div class="t" style="left:292.8px;top:5.56px;font-size:9.5px;line-height:9.5px;color:#e53935;font-weight:bold;font-style:normal;font-family:'Liberation Sans',sans-serif;transform:scaleX(0.9766);">C</div>
<div class="t" style="left:302.5px;top:5.56px;font-size:9.5px;line-height:9.5px;color:#3a3a3a;font-weight:normal;font-style:normal;font-family:'Liberation Sans',sans-serif;transform:scaleX(0.8493);">The Generate Quadcopte</div>
<div class="t" style="left:85px;top:27.61px;font-size:10.5px;line-height:10.5px;color:#0b8043;font-weight:normal;font-style:normal;font-family:'Liberation Sans',sans-serif;transform:scaleX(0.8717);">Secure</div>
<div class="t" style="left:126px;top:27.61px;font-size:10.5px;line-height:10.5px;color:#0b8043;font-weight:normal;font-style:normal;font-family:'Liberation Sans',sans-serif;transform:scaleX(1.0323);">https</div>
<div class="t" style="left:149.5px;top:27.61px;font-size:10.5px;line-height:10.5px;color:#888;font-weight:normal;font-style:normal;font-family:'Liberation Sans',sans-serif;transform:scaleX(1.0855);">://</div>
<div class="t" style="left:159px;top:27.61px;font-size:10.5px;line-height:10.5px;color:#222;font-weight:normal;font-style:normal;font-family:'Liberation Sans',sans-serif;transform:scaleX(0.8928);">cad.onshape.com</div>
<div class="t" style="left:233px;top:27.61px;font-size:10.5px;line-height:10.5px;color:#888;font-weight:normal;font-style:normal;font-family:'Liberation Sans',sans-serif;transform:scaleX(0.9346);">/documents/586b906a69ca5410c4d1f8f0/w/1b304900e15d59b9197e706c/e/9f799dbefb915f02ca993a9e</div>
<div class="t" style="left:4px;top:52.18px;font-size:15.5px;line-height:15.5px;color:#1c5eab;font-weight:bold;font-style:normal;font-family:'Liberation Sans',sans-serif;transform:scaleX(0.8368);-webkit-text-stroke:0.35px #1c5eab;">Onshape</div>
<div class="t" style="left:135.5px;top:53.70px;font-size:15px;line-height:15px;color:#2f3338;font-weight:bold;font-style:normal;font-family:'Liberation Sans',sans-serif;transform:scaleX(0.9885);">Grab Drone Comp - Final product in colour</div>
<div class="t" style="left:443.5px;top:57.91px;font-size:10.5px;line-height:10.5px;color:#8a8a8a;font-weight:normal;font-style:normal;font-family:'Liberation Sans',sans-serif;transform:scaleX(0.9886);">Main</div>
<div class="t" style="left:530px;top:55.49px;font-size:11px;line-height:11px;color:#555;font-weight:normal;font-style:normal;font-family:'Liberation Sans',sans-serif;transform:scaleX(0.8990);">0</div>
<div class="t" style="left:563px;top:55.49px;font-size:11px;line-height:11px;color:#555;font-weight:normal;font-style:normal;font-family:'Liberation Sans',sans-serif;transform:scaleX(0.8990);">0</div>
<div class="t" style="left:596px;top:55.49px;font-size:11px;line-height:11px;color:#555;font-weight:normal;font-style:normal;font-family:'Liberation Sans',sans-serif;transform:scaleX(0.8990);">0</div>
<div class="t" style="left:713.5px;top:52.38px;font-size:9px;line-height:9px;color:#fff;font-weight:bold;font-style:normal;font-family:'Liberation Sans',sans-serif;transform:scaleX(1.0988);">5</div>
<div class="t" style="left:734px;top:54.84px;font-size:12px;line-height:12px;color:#fff;font-weight:normal;font-style:normal;font-family:'Liberation Sans',sans-serif;transform:scaleX(0.8151);">App Store</div>
<div class="t" style="left:801.5px;top:54.84px;font-size:12px;line-height:12px;color:#fff;font-weight:normal;font-style:normal;font-family:'Liberation Sans',sans-serif;transform:scaleX(0.7807);">Share</div>
<div class="t" style="left:890px;top:54.84px;font-size:12px;line-height:12px;color:#444;font-weight:normal;font-style:normal;font-family:'Liberation Sans',sans-serif;transform:scaleX(0.8196);">Kevin Bartolo</div>
<div class="t" style="left:76px;top:81.77px;font-size:11.5px;line-height:11.5px;color:#444;font-weight:normal;font-style:normal;font-family:'Liberation Sans',sans-serif;transform:scaleX(0.8391);">Sketch</div>
<div class="t" style="left:747px;top:81.42px;font-size:12.5px;line-height:12.5px;color:#444;font-weight:bold;font-style:italic;font-family:'Liberation Serif',sans-serif;transform:scaleX(0.9605);">(x)</div>
<div class="t" style="left:7px;top:107.53px;font-size:10px;line-height:10px;color:#333;font-weight:normal;font-style:normal;font-family:'Liberation Sans',sans-serif;transform:scaleX(0.9330);">Features (64)</div>
<div class="t" style="left:9px;top:127.96px;font-size:9.5px;line-height:9.5px;color:#b8b8b8;font-weight:normal;font-style:italic;font-family:'Liberation Sans',sans-serif;transform:scaleX(0.9361);">Filter by name or type</div>
<div class="t" style="left:7px;top:151.73px;font-size:10px;line-height:10px;color:#333;font-weight:normal;font-style:normal;font-family:'Liberation Sans',sans-serif;transform:scaleX(0.9339);">Parts (10)</div>
<div class="t" style="left:18.5px;top:170.36px;font-size:9.5px;line-height:9.5px;color:#505050;font-weight:normal;font-style:normal;font-family:'Liberation Sans',sans-serif;transform:scaleX(0.9135);">Main Body</div>
<div class="t" style="left:18.5px;top:188.64px;font-size:9.5px;line-height:9.5px;color:#505050;font-weight:normal;font-style:normal;font-family:'Liberation Sans',sans-serif;transform:scaleX(0.9467);">Top plate post 1</div>
<div class="t" style="left:18.5px;top:206.92px;font-size:9.5px;line-height:9.5px;color:#505050;font-weight:normal;font-style:normal;font-family:'Liberation Sans',sans-serif;transform:scaleX(0.9542);">Top plate post 2</div>
<div class="t" style="left:18.5px;top:225.20px;font-size:9.5px;line-height:9.5px;color:#505050;font-weight:normal;font-style:normal;font-family:'Liberation Sans',sans-serif;transform:scaleX(0.9542);">Top plate post 3</div>
<div class="t" style="left:18.5px;top:243.48px;font-size:9.5px;line-height:9.5px;color:#505050;font-weight:normal;font-style:normal;font-family:'Liberation Sans',sans-serif;transform:scaleX(0.9542);">Top plate post 4</div>
<div class="t" style="left:18.5px;top:261.76px;font-size:9.5px;line-height:9.5px;color:#505050;font-weight:normal;font-style:normal;font-family:'Liberation Sans',sans-serif;transform:scaleX(0.9561);">Top Plate (Battery Holder)</div>
<div class="t" style="left:18.5px;top:280.04px;font-size:9.5px;line-height:9.5px;color:#505050;font-weight:normal;font-style:normal;font-family:'Liberation Sans',sans-serif;transform:scaleX(0.9379);">Velcro strap suggested p...</div>
<div class="t" style="left:18.5px;top:298.32px;font-size:9.5px;line-height:9.5px;color:#505050;font-weight:normal;font-style:normal;font-family:'Liberation Sans',sans-serif;transform:scaleX(0.9379);">Velcro strap suggested p...</div>
<div class="t" style="left:18.5px;top:316.60px;font-size:9.5px;line-height:9.5px;color:#505050;font-weight:normal;font-style:normal;font-family:'Liberation Sans',sans-serif;transform:scaleX(0.9379);">Velcro strap suggested p...</div>
<div class="t" style="left:18.5px;top:334.88px;font-size:9.5px;line-height:9.5px;color:#505050;font-weight:normal;font-style:normal;font-family:'Liberation Sans',sans-serif;transform:scaleX(0.9379);">Velcro strap suggested p...</div>
<div class="t" style="left:18.5px;top:353.16px;font-size:9.5px;line-height:9.5px;color:#505050;font-weight:normal;font-style:normal;font-family:'Liberation Sans',sans-serif;transform:scaleX(0.9567);">Surfaces (4)</div>
<div class="t" style="left:75px;top:460.51px;font-size:10.5px;line-height:10.5px;color:#444;font-weight:normal;font-style:normal;font-family:'Liberation Sans',sans-serif;transform:scaleX(0.9297);">Grab Transporter Parts</div>
<div class="t" style="left:217px;top:460.51px;font-size:10.5px;line-height:10.5px;color:#555;font-weight:normal;font-style:normal;font-family:'Liberation Sans',sans-serif;transform:scaleX(0.9213);">Assembly 1</div>
<div class="t" style="left:35px;top:491.53px;font-size:10px;line-height:10px;color:#333;font-weight:normal;font-style:normal;font-family:'Liberation Sans',sans-serif;transform:scaleX(0.8902);">blender-2.78a-win....msi</div>
<div class="t" style="left:194px;top:491.53px;font-size:10px;line-height:10px;color:#333;font-weight:normal;font-style:normal;font-family:'Liberation Sans',sans-serif;transform:scaleX(0.8626);">Grab Transporter Pa....stl</div>
<div class="t" style="left:353.5px;top:491.53px;font-size:10px;line-height:10px;color:#333;font-weight:normal;font-style:normal;font-family:'Liberation Sans',sans-serif;transform:scaleX(0.8626);">Grab Transporter Pa....stl</div>
<div class="t" style="left:513px;top:491.53px;font-size:10px;line-height:10px;color:#333;font-weight:normal;font-style:normal;font-family:'Liberation Sans',sans-serif;transform:scaleX(0.8626);">Grab Transporter Pa....stl</div>
<div class="t" style="left:673px;top:491.53px;font-size:10px;line-height:10px;color:#333;font-weight:normal;font-style:normal;font-family:'Liberation Sans',sans-serif;transform:scaleX(0.8626);">Grab Transporter Pa....stl</div>
<div class="t" style="left:891px;top:489.31px;font-size:10.5px;line-height:10.5px;color:#333;font-weight:normal;font-style:normal;font-family:'Liberation Sans',sans-serif;transform:scaleX(0.8063);">Show all</div>
<div class="t" style="left:457.5px;top:513.88px;font-size:22px;line-height:22px;color:#1e8fe6;font-weight:bold;font-style:normal;font-family:'Liberation Sans',sans-serif;transform:scaleX(1.3894);">e</div>
<div class="t" style="left:60px;top:519.77px;font-size:11.5px;line-height:11.5px;color:#b9b9b9;font-weight:normal;font-style:normal;font-family:'Liberation Sans',sans-serif;transform:scaleX(0.8940);">Ask me anything</div>
<div class="t" style="left:852px;top:520.96px;font-size:9.5px;line-height:9.5px;color:#fff;font-weight:normal;font-style:normal;font-family:'Liberation Sans',sans-serif;transform:scaleX(0.7772);">ENG</div>
<div class="t" style="left:889px;top:514.96px;font-size:9.5px;line-height:9.5px;color:#fff;font-weight:normal;font-style:normal;font-family:'Liberation Sans',sans-serif;transform:scaleX(0.7572);">17:46</div>
<div class="t" style="left:878px;top:527.96px;font-size:9.5px;line-height:9.5px;color:#fff;font-weight:normal;font-style:normal;font-family:'Liberation Sans',sans-serif;transform:scaleX(0.8413);">07/01/2017</div>
<div class="t" style="left:936px;top:528.38px;font-size:9px;line-height:9px;color:#fff;font-weight:bold;font-style:normal;font-family:'Liberation Sans',sans-serif;transform:scaleX(0.8990);">20</div>
<div class="t" style="left:864.5px;top:139.53px;font-size:10px;line-height:10px;color:#3434d8;font-weight:normal;font-style:normal;font-family:'Liberation Sans',sans-serif;transform:scaleX(1.0641);">Z</div>
<div class="t" style="left:905.5px;top:193.53px;font-size:10px;line-height:10px;color:#e03a3a;font-weight:normal;font-style:normal;font-family:'Liberation Sans',sans-serif;transform:scaleX(0.9745);">X</div>
<div class="t" style="left:888.5px;top:160.30px;font-size:8.5px;line-height:8.5px;color:#77cc77;font-weight:normal;font-style:normal;font-family:'Liberation Sans',sans-serif;transform:scaleX(0.8819);">Y</div>
<div class="a" style="left:106px;top:3px;width:20px;height:15px;background:linear-gradient(90deg,rgba(242,242,242,0),#f2f2f2 90%)"></div>
<div class="a" style="left:242px;top:3px;width:20px;height:15px;background:linear-gradient(90deg,rgba(222,222,222,0),#dedede 90%)"></div>
<div class="a" style="left:378px;top:3px;width:20px;height:15px;background:linear-gradient(90deg,rgba(222,222,222,0),#dedede 90%)"></div>
<div class="t" style="left:877px;top:165px;font-size:9px;line-height:9px;color:#333;transform:rotate(11deg) scaleX(0.92);transform-origin:0 0">Front</div>
<div class="t" style="left:891px;top:137.5px;font-size:6.5px;line-height:6.5px;color:#444;transform:rotate(22deg);transform-origin:0 0;font-style:italic">Top</div>
<div class="t" style="left:909px;top:174px;font-size:6.5px;line-height:6.5px;color:#444;transform:rotate(-58deg);transform-origin:0 0;font-style:italic">Right</div>
</body></html>
